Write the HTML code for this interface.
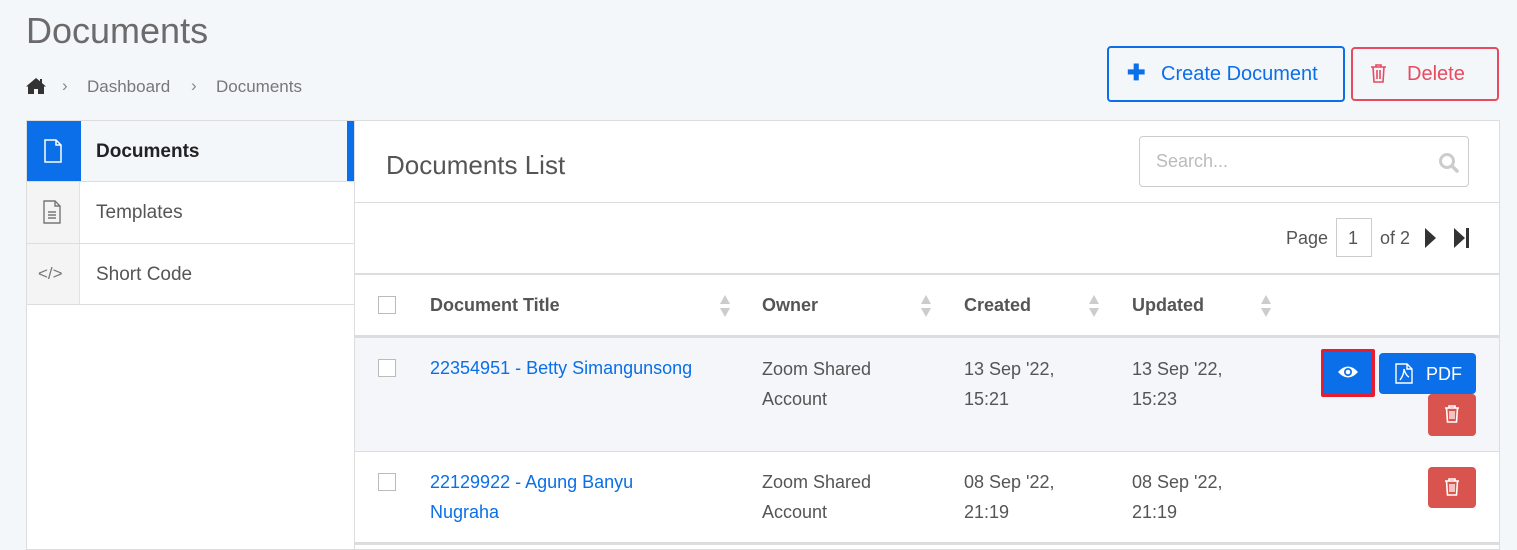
<!DOCTYPE html>
<html><head><style>
*{box-sizing:border-box;margin:0;padding:0}
body{width:1517px;height:546px;overflow:hidden;background:#f4f7fa;font-family:"Liberation Sans",sans-serif;color:#555;position:relative}
.a{position:absolute}
.t{white-space:nowrap}
</style></head><body>
<div class="a t" style="left:26px;top:10px;font-size:36px;color:#6b6b6b;font-weight:300;letter-spacing:0">Documents</div>
<svg class="a" style="left:25px;top:77px" width="22" height="18" viewBox="0 0 22 18"><path d="M11 1 L1 9.5 L3 9.5 L3 17 L9 17 L9 12 L13 12 L13 17 L19 17 L19 9.5 L21 9.5 L17 6 L17 2 L15 2 L15 4.3 Z" fill="#333"/></svg>
<div class="a t" style="left:62px;top:76px;font-size:17px;color:#888">›</div>
<div class="a t" style="left:87px;top:77px;font-size:17px;color:#777">Dashboard</div>
<div class="a t" style="left:191px;top:76px;font-size:17px;color:#888">›</div>
<div class="a t" style="left:216px;top:77px;font-size:17px;color:#777">Documents</div>

<div class="a" style="left:1107px;top:46px;width:238px;height:56px;border:2px solid #0a6fe8;border-radius:4px"></div>
<div class="a t" style="left:1127px;top:60px;font-size:22px;color:#0a6fe8;font-weight:bold">✚</div>
<div class="a t" style="left:1161px;top:63px;font-size:20px;color:#0a6fe8">Create Document</div>
<div class="a" style="left:1351px;top:47px;width:148px;height:54px;border:2px solid #e84a5f;border-radius:4px"></div>
<svg class="a" style="left:1370px;top:64px" width="17" height="19" viewBox="0 0 17 19"><path d="M1 3h15M6 3V1h5v2M3 3l1 15h9l1-15M7 6v9M10 6v9" stroke="#e84a5f" stroke-width="1.6" fill="none"/></svg>
<div class="a t" style="left:1407px;top:63px;font-size:20px;color:#e84a5f">Delete</div>

<!-- sidebar -->
<div class="a" style="left:26px;top:120px;width:329px;height:430px;background:#fff;border:1px solid #ddd"></div>
<div class="a" style="left:27px;top:121px;width:54px;height:60px;background:#0a6fe8"></div>
<div class="a" style="left:81px;top:121px;width:273px;height:60px;background:#f4f7fa"></div>
<div class="a" style="left:347px;top:121px;width:7px;height:60px;background:#0a6fe8"></div>
<svg class="a" style="left:43px;top:139px" width="20" height="24" viewBox="0 0 20 24"><path d="M2 1h11l5 5v17H2z M13 1v5h5" stroke="#fff" stroke-width="1.5" fill="none"/></svg>
<div class="a t" style="left:96px;top:141px;font-size:19px;color:#222;font-weight:bold">Documents</div>
<div class="a" style="left:27px;top:181px;width:327px;height:1px;background:#ddd"></div>
<div class="a" style="left:27px;top:182px;width:53px;height:122px;background:#f4f4f4;border-right:1px solid #e2e2e2"></div>
<svg class="a" style="left:42px;top:200px" width="20" height="24" viewBox="0 0 20 24"><path d="M2 1h11l5 5v17H2z M13 1v5h5 M6 12h8M6 15h8M6 18h8" stroke="#777" stroke-width="1.4" fill="none"/></svg>
<div class="a t" style="left:96px;top:202px;font-size:19px;color:#555">Templates</div>
<div class="a" style="left:27px;top:243px;width:327px;height:1px;background:#ddd"></div>
<div class="a t" style="left:38px;top:264px;font-size:17px;color:#777">&lt;/&gt;</div>
<div class="a t" style="left:96px;top:264px;font-size:19px;color:#555">Short Code</div>
<div class="a" style="left:27px;top:304px;width:327px;height:1px;background:#ddd"></div>

<!-- main -->
<div class="a" style="left:354px;top:120px;width:1146px;height:430px;background:#fff;border:1px solid #ddd"></div>
<div class="a t" style="left:386px;top:150px;font-size:26px;color:#555">Documents List</div>
<div class="a" style="left:1139px;top:136px;width:330px;height:51px;border:1px solid #ccc;border-radius:4px"></div>
<div class="a t" style="left:1156px;top:151px;font-size:18px;color:#bbb">Search...</div>
<svg class="a" style="left:1438px;top:152px" width="22" height="22" viewBox="0 0 22 22"><circle cx="9" cy="9" r="6.5" stroke="#ccc" stroke-width="3" fill="none"/><path d="M14 14l5 5" stroke="#ccc" stroke-width="3.5" stroke-linecap="round"/></svg>
<div class="a" style="left:355px;top:202px;width:1144px;height:1px;background:#ddd"></div>
<div class="a t" style="left:1286px;top:228px;font-size:18px;color:#555">Page</div>
<div class="a" style="left:1336px;top:218px;width:36px;height:39px;border:1px solid #ccc"></div>
<div class="a t" style="left:1348px;top:228px;font-size:18px;color:#555">1</div>
<div class="a t" style="left:1380px;top:228px;font-size:18px;color:#555">of 2</div>
<svg class="a" style="left:1424px;top:227px" width="50" height="22"><path d="M1 1l11 10L1 21z" fill="#333"/><path d="M30 1l11 10L30 21z" fill="#333"/><rect x="42" y="1" width="3" height="20" fill="#333"/></svg>
<div class="a" style="left:355px;top:273px;width:1144px;height:2px;background:#ddd"></div>

<div class="a" style="left:378px;top:296px;width:18px;height:18px;border:1px solid #bbb"></div>
<div class="a t" style="left:430px;top:295px;font-size:18px;font-weight:bold;color:#555">Document Title</div>
<div class="a t" style="left:762px;top:295px;font-size:18px;font-weight:bold;color:#555">Owner</div>
<div class="a t" style="left:964px;top:295px;font-size:18px;font-weight:bold;color:#555">Created</div>
<div class="a t" style="left:1132px;top:295px;font-size:18px;font-weight:bold;color:#555">Updated</div>
<svg class="a" style="left:719px;top:294px" width="12" height="24"><path d="M6 1l5 9H1z M6 23l5-9H1z" fill="#ccc"/></svg>
<svg class="a" style="left:920px;top:294px" width="12" height="24"><path d="M6 1l5 9H1z M6 23l5-9H1z" fill="#ccc"/></svg>
<svg class="a" style="left:1088px;top:294px" width="12" height="24"><path d="M6 1l5 9H1z M6 23l5-9H1z" fill="#ccc"/></svg>
<svg class="a" style="left:1260px;top:294px" width="12" height="24"><path d="M6 1l5 9H1z M6 23l5-9H1z" fill="#ccc"/></svg>
<div class="a" style="left:355px;top:335px;width:1144px;height:3px;background:#ddd"></div>

<div class="a" style="left:355px;top:338px;width:1144px;height:113px;background:#f4f6f9"></div>
<div class="a" style="left:378px;top:359px;width:18px;height:18px;border:1px solid #bbb;background:#fff"></div>
<div class="a t" style="left:430px;top:358px;font-size:18px;color:#0a6fe8">22354951 - Betty Simangunsong</div>
<div class="a" style="left:762px;top:354px;font-size:18px;line-height:30px;color:#555">Zoom Shared<br>Account</div>
<div class="a" style="left:964px;top:354px;font-size:18px;line-height:30px;color:#555">13 Sep '22,<br>15:21</div>
<div class="a" style="left:1132px;top:354px;font-size:18px;line-height:30px;color:#555">13 Sep '22,<br>15:23</div>
<div class="a" style="left:1321px;top:349px;width:54px;height:48px;background:#0a6fe8;border:3px solid #e81c2e;border-radius:2px"></div>
<svg class="a" style="left:1337px;top:364px" width="22" height="16" viewBox="0 0 22 16"><path d="M1 8Q11 -3 21 8Q11 19 1 8z" fill="#fff"/><circle cx="11" cy="8" r="4" fill="#0a6fe8"/><circle cx="11" cy="8" r="2.3" fill="#fff"/></svg>
<div class="a" style="left:1379px;top:353px;width:97px;height:41px;background:#0a6fe8;border-radius:4px"></div>
<svg class="a" style="left:1395px;top:363px" width="18" height="21" viewBox="0 0 18 21"><path d="M1 1h11l5 5v14H1z M12 1v5h5 M5 17c3-4 4-8 4-11 1 4 3 7 5 8" stroke="#fff" stroke-width="1.4" fill="none"/></svg>
<div class="a t" style="left:1426px;top:364px;font-size:18px;color:#fff">PDF</div>
<div class="a" style="left:1428px;top:394px;width:48px;height:42px;background:#d9534f;border-radius:4px"></div>
<svg class="a" style="left:1444px;top:405px" width="16" height="18" viewBox="0 0 16 18"><path d="M1 3h14M5 3V1h6v2M2.5 3l1 14h9l1-14z" stroke="#fff" stroke-width="1.6" fill="none"/><path d="M6 6v8M8 6v8M10 6v8" stroke="#fff" stroke-width="1.3"/></svg>
<div class="a" style="left:355px;top:451px;width:1144px;height:1px;background:#ddd"></div>

<div class="a" style="left:378px;top:473px;width:18px;height:18px;border:1px solid #bbb"></div>
<div class="a" style="left:430px;top:467px;font-size:18px;line-height:30px;color:#0a6fe8">22129922 - Agung Banyu<br>Nugraha</div>
<div class="a" style="left:762px;top:467px;font-size:18px;line-height:30px;color:#555">Zoom Shared<br>Account</div>
<div class="a" style="left:964px;top:467px;font-size:18px;line-height:30px;color:#555">08 Sep '22,<br>21:19</div>
<div class="a" style="left:1132px;top:467px;font-size:18px;line-height:30px;color:#555">08 Sep '22,<br>21:19</div>
<div class="a" style="left:1428px;top:467px;width:48px;height:41px;background:#d9534f;border-radius:4px"></div>
<svg class="a" style="left:1444px;top:478px" width="16" height="18" viewBox="0 0 16 18"><path d="M1 3h14M5 3V1h6v2M2.5 3l1 14h9l1-14z" stroke="#fff" stroke-width="1.6" fill="none"/><path d="M6 6v8M8 6v8M10 6v8" stroke="#fff" stroke-width="1.3"/></svg>
<div class="a" style="left:355px;top:542px;width:1144px;height:3px;background:#ddd"></div>
</body></html>
